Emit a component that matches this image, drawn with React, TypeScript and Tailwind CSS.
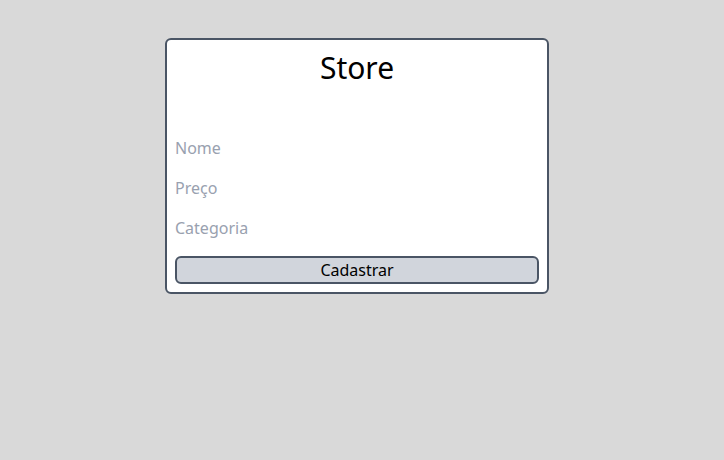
export default function App() {
  return (
    <div className="flex min-h-[460px] w-full justify-center bg-[#d9d9d9] pr-[10px] pt-[38px] font-['Noto_Sans',sans-serif]">
      <div className="flex h-fit w-96 flex-col rounded-md border-2 border-gray-600 bg-white p-2">
        <h1 className="text-center text-3xl leading-10 text-black">Store</h1>
        <form className="mt-10 flex flex-col" onSubmit={(e) => e.preventDefault()}>
          <input
            type="text"
            placeholder="Nome"
            className="h-10 w-full bg-transparent text-base text-black outline-none placeholder:text-gray-400"
          />
          <input
            type="text"
            placeholder="Preço"
            className="h-10 w-full bg-transparent text-base text-black outline-none placeholder:text-gray-400"
          />
          <input
            type="text"
            placeholder="Categoria"
            className="h-10 w-full bg-transparent text-base text-black outline-none placeholder:text-gray-400"
          />
          <button
            type="submit"
            className="mt-2 h-7 w-full rounded-md border-2 border-gray-600 bg-gray-300 text-base leading-6 text-black"
          >
            Cadastrar
          </button>
        </form>
      </div>
    </div>
  );
}
